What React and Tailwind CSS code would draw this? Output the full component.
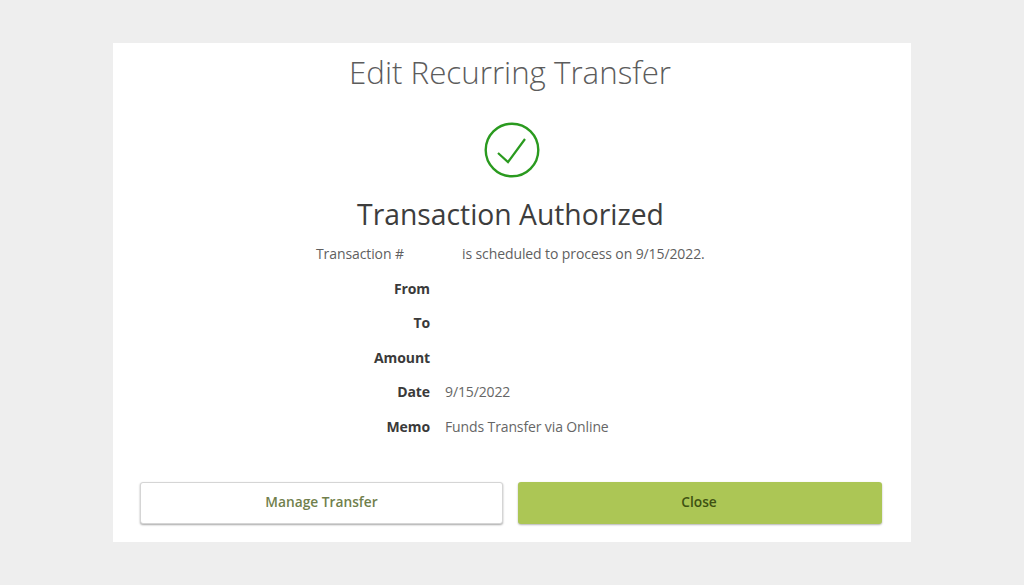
import React from 'react';

const rows = [
  { label: 'From', value: '' },
  { label: 'To', value: '' },
  { label: 'Amount', value: '' },
  { label: 'Date', value: '9/15/2022' },
  { label: 'Memo', value: 'Funds Transfer via Online' },
];

export default function App() {
  return (
    <div className="w-[1024px] h-[585px] bg-[#eeeeee] flex items-start justify-center pt-[43px] font-['Open_Sans',sans-serif]">
      <div className="w-[798px] h-[499px] bg-white flex flex-col items-center">
        {/* Titre */}
        <h1 className="mt-[6px] mr-[4px] h-[46px] leading-[46px] text-[31.3px] font-light text-[#5c5c5c]">Edit Recurring Transfer</h1>

        <svg className="mt-[27px] mr-[1px]" width="56" height="56" viewBox="0 0 56 56" fill="none">
          <circle cx="28" cy="28" r="26.3" stroke="#2a9a1f" strokeWidth="2.4" />
          <path d="M14 31 L24 40 L41 17" stroke="#2a9a1f" strokeWidth="2.2" />
        </svg>

        <h2 className="mt-[17px] mr-[3px] h-[38px] leading-[38px] text-[28.3px] text-[#3d3d3d]">Transaction Authorized</h2>

        <p className="mt-[11px] h-[20px] leading-[20px] text-[14px] text-[#5f5f5f] flex w-full pl-[203px] tracking-[-0.1px]">
          <span className="w-[146px]">Transaction #</span>
          <span>is scheduled to process on 9/15/2022.</span>
        </p>

        {/* Details */}
        <div className="mt-[15px] w-full flex flex-col gap-[14.4px]">
          {rows.map((r) => (
            <div key={r.label} className="flex h-[20px] leading-[20px] text-[14px]">
              <div className="w-[317px] text-right font-bold text-[#3a3a3a] tracking-[-0.1px]">{r.label}</div>
              <div className="ml-[15px] text-[#666666] tracking-[-0.12px]">{r.value}</div>
            </div>
          ))}
        </div>

        {/* Boutons */}
        <div className="mt-[45px] w-full flex pl-[27px] pr-[29px] gap-[15px]">
          <button className="w-[363px] h-[42px] bg-white border border-[#d5d5d5] rounded-[3px] shadow-[0_1px_2px_rgba(0,0,0,0.35)] text-[13.75px] font-semibold text-[#717f4c]">Manage Transfer</button>
          <button className="w-[364px] h-[42px] pr-[2px] bg-[#acc655] rounded-[3px] shadow-[0_1px_2px_rgba(0,0,0,0.3)] text-[13.75px] font-semibold text-[#3f5212]">Close</button>
        </div>
      </div>
    </div>
  );
}
